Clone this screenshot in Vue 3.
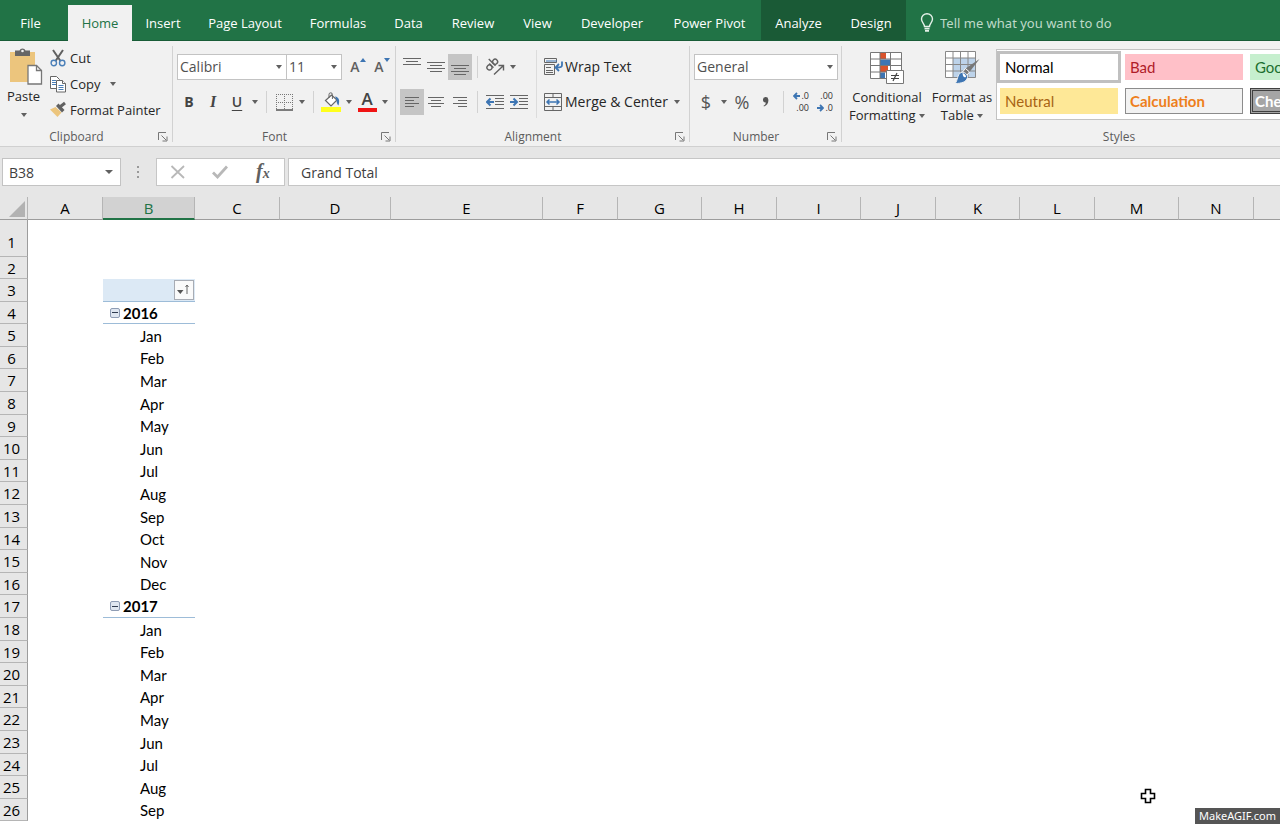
<script setup>
import { ref } from 'vue'

const tabs = [
  { name: 'File', width: 68 },
  { name: 'Home', width: 64, kind: 'active' },
  { name: 'Insert', width: 62 },
  { name: 'Page Layout', width: 102 },
  { name: 'Formulas', width: 84 },
  { name: 'Data', width: 57 },
  { name: 'Review', width: 72 },
  { name: 'View', width: 57 },
  { name: 'Developer', width: 92 },
  { name: 'Power Pivot', width: 103 },
  { name: 'Analyze', width: 75, kind: 'context' },
  { name: 'Design', width: 70, kind: 'context' },
]

const cellStyles = [
  { name: 'Normal', kind: 'normal' },
  { name: 'Bad', kind: 'bad' },
  { name: 'Good', kind: 'good' },
  { name: 'Neutral', kind: 'neutral' },
  { name: 'Calculation', kind: 'calculation' },
  { name: 'Check Cell', kind: 'check' },
]

const columns = [
  { name: 'A', width: 75 },
  { name: 'B', width: 92 },
  { name: 'C', width: 85 },
  { name: 'D', width: 111 },
  { name: 'E', width: 152 },
  { name: 'F', width: 75 },
  { name: 'G', width: 84 },
  { name: 'H', width: 75 },
  { name: 'I', width: 84 },
  { name: 'J', width: 75 },
  { name: 'K', width: 84 },
  { name: 'L', width: 75 },
  { name: 'M', width: 84 },
  { name: 'N', width: 75 },
]

const months = ['Jan', 'Feb', 'Mar', 'Apr', 'May', 'Jun', 'Jul', 'Aug', 'Sep', 'Oct', 'Nov', 'Dec']
const pivot = [
  { kind: 'blank' },
  { kind: 'blank' },
  { kind: 'filter' },
  { kind: 'year', text: '2016' },
  ...months.map((text) => ({ kind: 'month', text })),
  { kind: 'year', text: '2017' },
  ...months.slice(0, 9).map((text) => ({ kind: 'month', text })),
]
const rowHeights = [23, 22, 23, 22, 23]
const rows = pivot.map((row, i) => ({
  ...row,
  number: i + 1,
  height: i === 0 ? 37 : i === 1 ? 22 : rowHeights[(i - 2) % 5],
}))

const fontName = ref('Calibri')
const fontSize = ref('11')
const numberFormat = ref('General')
const cellName = ref('B38')
const formula = ref('Grand Total')
</script>

<template>
  <div class="app">
    <header class="tabs">
      <nav class="tab-list" aria-label="Ribbon tabs">
        <button
          v-for="tab in tabs"
          :key="tab.name"
          class="tab"
          :class="tab.kind"
          :style="{ width: tab.width + 'px' }"
        >{{ tab.name }}</button>
      </nav>
      <label class="tell">
        <svg width="14" height="20" viewBox="0 0 14 20" fill="none" stroke="#e4f0e8" stroke-width="1.4">
          <path d="M4.5 13.5C4.5 10.5 1.5 9.5 1.5 6a5.5 5.2 0 0 1 11 0c0 3.500-3 4.500-3 7.500z" />
          <path d="M4.500 15.700h5M5 17.800h4" stroke-width="1.800" />
        </svg>
        <input type="text" aria-label="Tell me" placeholder="Tell me what you want to do" />
      </label>
    </header>

    <div class="ribbon">
      <section class="group clipboard">
        <div class="body clip-body">
          <button class="paste">
            <svg width="34" height="37" viewBox="0 0 34 37">
              <rect x="1" y="4" width="25" height="30" fill="#ecc57d" />
              <path d="M6 2.500h4.500a3.200 3.200 0 0 1 6 0H21V8H6z" fill="#666" />
              <circle cx="13.500" cy="3" r="1.300" fill="#f1f1f1" />
              <path d="M19 17.500h8.500l5 5V36H19z" fill="#fff" stroke="#777" stroke-width="1.300" />
              <path d="M27.500 17.500v5h5" fill="none" stroke="#777" stroke-width="1.300" />
            </svg>
            <span>Paste</span>
            <i class="arrow"></i>
          </button>
          <div class="clip-list">
            <button class="small">
              <svg width="16" height="18" viewBox="0 0 16 18" fill="none">
                <path d="M3 1l7.500 11M13 1L5.500 12" stroke="#606060" stroke-width="2" />
                <circle cx="3.800" cy="14" r="2.700" stroke="#4a7fb8" stroke-width="1.400" />
                <circle cx="12.200" cy="14" r="2.700" stroke="#4a7fb8" stroke-width="1.400" />
              </svg>
              <span>Cut</span>
            </button>
            <button class="small">
              <svg width="16" height="18" viewBox="0 0 16 18" fill="#fff" stroke="#666">
                <path d="M.5 1.500h6l3 3v9h-9z" />
                <path d="M2 5.500h4M2 7.500h4M2 9.500h4" stroke="#4a7fb8" />
                <path d="M6.500 5.500h6l3 3v8.500h-9z" />
                <path d="M12.500 5.500v3h3" />
                <path d="M8.500 10.500h5M8.500 12.500h5M8.500 14.500h5" stroke="#4a7fb8" />
              </svg>
              <span>Copy</span>
              <i class="arrow spaced"></i>
            </button>
            <button class="small">
              <svg width="16" height="18" viewBox="0 0 16 18">
                <path d="M0 8.500l5.500-2.500 6 5.500-4 4.500z" fill="#ecc57d" />
                <path d="M6 5l2.500-2.500 6 6.500-2.500 2.500z" fill="#606060" />
                <path d="M10.500 5.500L15 2" stroke="#606060" stroke-width="3" />
              </svg>
              <span>Format Painter</span>
            </button>
          </div>
        </div>
        <footer class="foot"><span>Clipboard</span>
          <button class="launch" aria-label="Clipboard settings"><svg width="10" height="10" viewBox="0 0 10 10" fill="none" stroke="#777"><path d="M.5 8V.5H8M3.500 3.500L8 8M9 4.500V9H4.500" /></svg></button>
        </footer>
      </section>

      <section class="group font">
        <div class="body stack">
          <div class="line">
            <div class="combo name">
              <select v-model="fontName" aria-label="Font"><option>Calibri</option></select>
              <i class="arrow"></i>
            </div>
            <div class="combo size">
              <select v-model="fontSize" aria-label="Font size"><option>11</option></select>
              <i class="arrow"></i>
            </div>
            <button class="tool grow" aria-label="Increase font size"><span class="letter">A</span><svg width="6" height="4" viewBox="0 0 6 4"><path d="M0 4l3-4 3 4z" fill="#3d75b3" /></svg></button>
            <button class="tool grow" aria-label="Decrease font size"><span class="letter">A</span><svg width="6" height="4" viewBox="0 0 6 4"><path d="M0 0l3 4 3-4z" fill="#3d75b3" /></svg></button>
          </div>
          <div class="line">
            <button class="tool bold">B</button>
            <button class="tool italic">I</button>
            <button class="tool under">U</button>
            <button class="drop" aria-label="Underline options"><i class="arrow"></i></button>
            <span class="sep"></span>
            <button class="tool" aria-label="Borders">
              <svg width="17" height="17" viewBox="0 0 17 17" fill="none" stroke="#777">
                <path d="M.5 0v16M16.500 0v16M8.500 0v16M0 .5h17M0 8.500h17" stroke-dasharray="1 1" />
                <path d="M0 16h17" stroke="#555" stroke-width="1.500" />
              </svg>
            </button>
            <button class="drop" aria-label="Border options"><i class="arrow"></i></button>
            <span class="sep"></span>
            <button class="tool" aria-label="Fill color">
              <svg width="20" height="20" viewBox="0 0 20 20">
                <path d="M4.500 8.500l6-5.500 5.500 5-6 6z" fill="#fff" stroke="#666" stroke-width="1.200" />
                <path d="M8 6V2.500a1.700 1.700 0 0 1 3.400 0V7" fill="none" stroke="#666" />
                <path d="M14 4.500c4 .5 5 4 3.500 9-1.500-1-2-4-2-6z" fill="#3d75b3" />
                <path d="M0 15h20v5H0z" fill="#ffff1c" />
              </svg>
            </button>
            <button class="drop" aria-label="Fill color options"><i class="arrow"></i></button>
            <button class="tool fontcolor" aria-label="Font color"><span>A</span></button>
            <button class="drop" aria-label="Font color options"><i class="arrow"></i></button>
          </div>
        </div>
        <footer class="foot"><span>Font</span>
          <button class="launch" aria-label="Font settings"><svg width="10" height="10" viewBox="0 0 10 10" fill="none" stroke="#777"><path d="M.5 8V.5H8M3.500 3.500L8 8M9 4.500V9H4.500" /></svg></button>
        </footer>
      </section>

      <section class="group alignment">
        <div class="body align-body">
          <div class="stack align-left">
            <div class="line">
              <button class="tool" aria-label="Top align"><svg width="18" height="18" viewBox="0 0 18 18" stroke="#666"><path d="M0 .5h18M3 3.500h12M0 6.500h18" /></svg></button>
              <button class="tool" aria-label="Middle align"><svg width="18" height="18" viewBox="0 0 18 18" stroke="#666"><path d="M0 4.500h18M3 7.500h12M0 10.500h18M3 13.500h12" /></svg></button>
              <button class="tool on" aria-label="Bottom align"><svg width="18" height="18" viewBox="0 0 18 18" stroke="#666"><path d="M0 7.500h18M3 10.500h12M0 13.500h18M3 16.500h12" /></svg></button>
              <span class="sep"></span>
              <button class="tool" aria-label="Orientation">
                <svg width="20" height="20" viewBox="0 0 20 20" fill="none" stroke="#606060" stroke-width="1.400">
                  <g transform="rotate(-45 8 9)">
                    <circle cx="4.500" cy="7.500" r="2.500" /><path d="M7.200 4.500v6" />
                    <circle cx="12.500" cy="7.500" r="2.500" /><path d="M10 1v9.500" />
                  </g>
                  <path d="M9 17.500l9-8.500M13.500 8.500H18.500v5" />
                </svg>
              </button>
              <button class="drop" aria-label="Orientation options"><i class="arrow"></i></button>
            </div>
            <div class="line">
              <button class="tool on" aria-label="Align left"><svg width="14" height="14" viewBox="0 0 14 14" stroke="#666"><path d="M0 2.500h14M0 5.500h9M0 8.500h14M0 11.500h9" /></svg></button>
              <button class="tool" aria-label="Center"><svg width="16" height="14" viewBox="0 0 16 14" stroke="#666"><path d="M0 2.500h16M3 5.500h10M0 8.500h16M3 11.500h10" /></svg></button>
              <button class="tool" aria-label="Align right"><svg width="14" height="14" viewBox="0 0 14 14" stroke="#666"><path d="M0 2.500h14M5 5.500h9M0 8.500h14M5 11.500h9" /></svg></button>
              <span class="sep"></span>
              <button class="tool" aria-label="Decrease indent"><svg width="18" height="16" viewBox="0 0 18 16" stroke="#666" fill="none"><path d="M0 1.500h18M9 4.500h9M9 7.500h9M9 10.500h9M0 14.500h18" /><path d="M8 8H1.500M4.500 4.500L1 8l3.500 3.500" stroke="#3d75b3" stroke-width="2" /></svg></button>
              <button class="tool" aria-label="Increase indent"><svg width="18" height="16" viewBox="0 0 18 16" stroke="#666" fill="none"><path d="M0 1.500h18M9 4.500h9M9 7.500h9M9 10.500h9M0 14.500h18" /><path d="M0 8h6.500M3.500 4.500L7 8l-3.500 3.500" stroke="#3d75b3" stroke-width="2" /></svg></button>
            </div>
          </div>
          <div class="stack align-right">
            <div class="line">
              <button class="small">
                <svg width="19" height="18" viewBox="0 0 19 18" fill="none" stroke="#666">
                  <path d="M.5.5h12v4H.5zM.5 6.500h10v10H.5z" />
                  <path d="M2 9.500h5M2 12.500h7M2 14.500h7" stroke="#666" />
                  <path d="M2 3h11" stroke="#3d75b3" />
                  <path d="M18 3.500v3.500c0 2-1 2.500-5.500 2.500M15 6l-3.500 3.500L15 13" stroke="#3d75b3" stroke-width="1.800" />
                </svg>
                <span>Wrap Text</span>
              </button>
            </div>
            <div class="line">
              <button class="small">
                <svg width="19" height="18" viewBox="0 0 19 18" fill="none" stroke="#666">
                  <path d="M.5.5h17v17H.5zM.5 4.500h17M.5 13.500h17M9 .5v4M9 13.500v4" />
                  <path d="M3 9h12M5.500 6.500L3 9l2.500 2.500M12.500 6.500L15 9l-2.500 2.500" stroke="#3d75b3" stroke-width="1.500" />
                </svg>
                <span>Merge &amp; Center</span>
              </button>
              <button class="drop merge-drop" aria-label="Merge options"><i class="arrow"></i></button>
            </div>
          </div>
        </div>
        <footer class="foot"><span>Alignment</span>
          <button class="launch" aria-label="Alignment settings"><svg width="10" height="10" viewBox="0 0 10 10" fill="none" stroke="#777"><path d="M.5 8V.5H8M3.500 3.500L8 8M9 4.500V9H4.500" /></svg></button>
        </footer>
      </section>

      <section class="group number">
        <div class="body stack">
          <div class="line">
            <div class="combo format">
              <select v-model="numberFormat" aria-label="Number format"><option>General</option></select>
              <i class="arrow"></i>
            </div>
          </div>
          <div class="line">
            <button class="tool glyph">$</button>
            <button class="drop" aria-label="Currency options"><i class="arrow"></i></button>
            <button class="tool glyph">%</button>
            <button class="tool" aria-label="Comma style"><svg width="8" height="10" viewBox="0 0 8 10"><path d="M1 3a2.500 2.500 0 0 1 5.300-.5C6.800 5.500 5 8.500 2 9.500L1.500 8.700C3 8 3.800 6.800 3.800 5.400 2 5.600 1 4.500 1 3z" fill="#555" /></svg></button>
            <span class="sep"></span>
            <button class="tool decimals" aria-label="Increase decimal">
              <span><svg width="7" height="8" viewBox="0 0 7 8" fill="none" stroke="#3d75b3" stroke-width="1.800"><path d="M7 4H1.500M4 1L1 4l3 3" /></svg>.0</span>
              <span>.00</span>
            </button>
            <button class="tool decimals" aria-label="Decrease decimal">
              <span>.00</span>
              <span><svg width="7" height="8" viewBox="0 0 7 8" fill="none" stroke="#3d75b3" stroke-width="1.800"><path d="M0 4h5.500M3 1l3 3-3 3" /></svg>.0</span>
            </button>
          </div>
        </div>
        <footer class="foot"><span>Number</span>
          <button class="launch" aria-label="Number settings"><svg width="10" height="10" viewBox="0 0 10 10" fill="none" stroke="#777"><path d="M.5 8V.5H8M3.500 3.500L8 8M9 4.500V9H4.500" /></svg></button>
        </footer>
      </section>

      <section class="group styles">
        <div class="body styles-body">
          <button class="large conditional">
            <svg width="36" height="34" viewBox="0 0 36 34">
              <path d="M1.500 1.500h31v26h-31z" fill="#fff" />
              <path d="M11 2h6v6h-6zM11 15h8v6h-8z" fill="#d9532c" />
              <path d="M11 8.500h10v6H11zM11 21.500h5v5.500h-5z" fill="#3d75b3" />
              <path d="M1.500 1.500h31v26h-31zM1.500 8h31M1.500 14.500h31M1.500 21h31M11 1.500v26M21.500 1.500v26" fill="none" stroke="#777" />
              <path d="M17.500 19.500h17v13h-17z" fill="#fff" stroke="#777" />
              <path d="M22 24.500h8M22 27.500h8M28 22l-4 8" stroke="#444" stroke-width="1.200" />
            </svg>
            <span>Conditional</span>
            <span>Formatting <i class="arrow"></i></span>
          </button>
          <button class="large table-format">
            <svg width="36" height="34" viewBox="0 0 36 34">
              <path d="M1.500.5h30v26h-30z" fill="#fff" />
              <path d="M9 7h22.500v19.500H9z" fill="#bdd3ea" />
              <path d="M1.500.5h30v26h-30zM1.500 7h30M1.500 13.500h30M1.500 20h30M9 .5v26M16.500.5v26M24 .5v26" fill="none" stroke="#888" />
              <path d="M35.500 8l-10 13-4-3.500z" fill="#777" />
              <path d="M25.500 21l-2.500 3-4.500-3 3-3.500z" fill="#777" stroke="#fff" />
              <path d="M17 21.500c3-1 7 1.500 6.500 5-1 4.500-6 6-12.500 6 3-3 2-9 6-11z" fill="#3d75b3" stroke="#f1f1f1" />
              <path d="M18.500 22c2 .5 3.500 2 3.500 4-2 1-3 0-3.500-4z" fill="#fff" />
            </svg>
            <span>Format as</span>
            <span>Table <i class="arrow"></i></span>
          </button>
          <div class="gallery">
            <button v-for="s in cellStyles" :key="s.name" class="style" :class="s.kind">{{ s.name }}</button>
          </div>
        </div>
        <footer class="foot"><span>Styles</span></footer>
      </section>
    </div>

    <div class="formula-bar">
      <div class="name-box">
        <input v-model="cellName" type="text" aria-label="Name box" />
        <i class="arrow"></i>
      </div>
      <svg class="dots" width="4" height="14" viewBox="0 0 4 14" fill="#999"><path d="M1 1h2v2H1zM1 6h2v2H1zM1 11h2v2H1z" /></svg>
      <div class="entry">
        <button aria-label="Cancel"><svg width="16" height="14" viewBox="0 0 16 14" fill="none" stroke="#b8b8b8" stroke-width="1.800"><path d="M1.500 1l12.500 12M14 1L1.500 13" /></svg></button>
        <button aria-label="Enter"><svg width="16" height="14" viewBox="0 0 16 14" fill="none" stroke="#b8b8b8" stroke-width="2.800"><path d="M1 7.500l4.500 4.500L15 1.500" /></svg></button>
        <button class="fx" aria-label="Insert function"><span class="f">f</span><span class="x">x</span></button>
      </div>
      <input v-model="formula" class="formula" type="text" aria-label="Formula" />
    </div>

    <main class="sheet">
      <table>
        <colgroup>
          <col class="head-col" />
          <col v-for="c in columns" :key="c.name" :style="{ width: c.width + 'px' }" />
          <col />
        </colgroup>
        <thead>
          <tr>
            <th class="corner"><svg width="16" height="16" viewBox="0 0 16 16"><path d="M16 0v16H0z" fill="#b2b2b2" /></svg></th>
            <th v-for="c in columns" :key="c.name" scope="col" :class="{ selected: c.name === 'B' }">{{ c.name }}</th>
            <th class="last"></th>
          </tr>
        </thead>
        <tbody>
          <tr v-for="row in rows" :key="row.number" :style="{ height: row.height + 'px' }">
            <th scope="row">{{ row.number }}</th>
            <td></td>
            <td :class="row.kind">
              <button v-if="row.kind === 'filter'" class="filter-button" aria-label="Filter and sort">
                <svg width="14" height="12" viewBox="0 0 14 12"><path d="M0 6h6.500L3.300 10z" fill="#555" /><path d="M10 10V1M8.500 3L10 1l1.500 2" fill="none" stroke="#666" /></svg>
              </button>
              <div v-else-if="row.kind === 'year'" class="year-line">
                <button class="fold" aria-label="Collapse"></button>
                <span>{{ row.text }}</span>
              </div>
              <template v-else>{{ row.text }}</template>
            </td>
            <td v-for="n in columns.length - 1" :key="n"></td>
          </tr>
        </tbody>
      </table>
    </main>

    <svg class="cursor" width="16" height="16" viewBox="0 0 16 16"><path d="M5.500 1.500h5v4h4v5h-4v4h-5v-4h-4v-5h4z" fill="#fff" stroke="#000" stroke-width="1.600" /></svg>
    <div class="badge">MakeAGIF.com</div>
  </div>
</template>

<style>
html,
body {
  overflow: hidden;
  background: #fff;
}
</style>

<style scoped>
.app {
  position: relative;
  display: flex;
  flex-direction: column;
  height: 100vh;
  overflow: hidden;
  background: #fff;
  color: #262626;
  font: 14px/18px "Open Sans", "Noto Sans", sans-serif;
}
.app * {
  box-sizing: border-box;
}
button,
input,
select {
  margin: 0;
  padding: 0;
  border: 0;
  border-radius: 0;
  background: transparent;
  color: inherit;
  font: inherit;
}
svg {
  display: block;
  flex: none;
}
.arrow {
  display: inline-block;
  flex: none;
  border: 3px solid transparent;
  border-top: 4px solid #606060;
  border-bottom: 0;
}

/* Tabs */
.tabs {
  display: flex;
  flex: none;
  height: 41px;
  background: #217346;
  border-bottom: 1px solid #185c37;
  color: #fff;
}
.tab-list {
  display: flex;
  flex: none;
}
.tab {
  height: 40px;
  padding-top: 6px;
  white-space: nowrap;
  font-size: 13px;
}
.tab:first-child {
  padding-right: 7px;
}
.tab.active {
  height: 36px;
  margin-top: 5px;
  padding-top: 0;
  margin-bottom: -1px;
  background: #f1f1f1;
  color: #217346;
}
.tab.context {
  background: #1a5a36;
}
.tell {
  display: flex;
  flex: 1;
  align-items: center;
  gap: 6px;
  padding: 6px 0 0 14px;
}
.tell input {
  flex: 1;
  min-width: 0;
  font: 13px/18px "Noto Sans", sans-serif;
  outline: 0;
}
.tell input::placeholder {
  color: #bfdac9;
  opacity: 1;
}

/* Ribbon */
.ribbon {
  display: flex;
  flex: none;
  height: 106px;
  overflow: hidden;
  background: #f1f1f1;
  border-bottom: 1px solid #d0d0d0;
}
.group {
  display: flex;
  flex-direction: column;
  flex: none;
  position: relative;
}
.group::after {
  content: "";
  position: absolute;
  top: 5px;
  right: 0;
  bottom: 4px;
  width: 1px;
  background: #d2d2d2;
}
.clipboard { width: 173px; }
.font { width: 223px; }
.alignment { width: 294px; }
.number { width: 152px; }
.styles { width: 554px; }
.body {
  flex: 1;
  padding: 0 4px;
}
.foot {
  display: flex;
  align-items: center;
  height: 18px;
  color: #5c5c5c;
  font-size: 12px;
}
.foot span {
  flex: 1;
  text-align: center;
}
.launch {
  display: grid;
  place-items: center;
  width: 20px;
  height: 16px;
}
.stack {
  display: flex;
  flex-direction: column;
  gap: 9px;
  padding-top: 13px;
}
.line {
  display: flex;
  align-items: center;
  height: 26px;
}
.tool {
  display: grid;
  place-items: center;
  flex: none;
  width: 24px;
  height: 26px;
  color: #444;
}
.tool.on {
  background: #c5c5c5;
}
.drop {
  display: grid;
  place-items: center;
  flex: none;
  width: 12px;
  height: 26px;
}
.sep {
  flex: none;
  width: 1px;
  height: 22px;
  margin: 0 5px;
  background: #d2d2d2;
}
.small {
  display: flex;
  align-items: center;
  gap: 3px;
  height: 26px;
  white-space: nowrap;
}
.clip-body {
  display: flex;
  gap: 4px;
  font-size: 13px;
}
.paste {
  display: flex;
  flex-direction: column;
  align-items: center;
  width: 39px;
  padding-top: 7px;
}
.paste svg {
  margin-left: 5px;
}
.paste span {
  margin: 2px 0 8px;
}
.clip-list {
  display: flex;
  flex-direction: column;
  padding: 4px 0 0 3px;
}
.clip-list .small {
  gap: 4px;
}
.spaced {
  margin-left: 6px;
}
.combo,
.name-box {
  position: relative;
  flex: none;
  height: 26px;
  background: #fff;
  border: 1px solid #c3c3c3;
}
.combo select {
  width: 100%;
  height: 100%;
  padding: 0 2px;
  appearance: none;
  color: #505050;
  outline: 0;
}
.combo .arrow,
.name-box .arrow {
  position: absolute;
  top: 50%;
  right: 4px;
  margin-top: -2px;
  pointer-events: none;
}
.combo.name { width: 110px; }
.combo.size {
  width: 56px;
  margin: 0 4px 0 -1px;
}
.combo.format { width: 144px; }
.grow {
  grid-template-columns: auto auto;
  justify-content: center;
  color: #606060;
}
.grow svg {
  align-self: start;
  margin-top: 4px;
}
.letter {
  font-size: 14px;
  font-weight: 600;
}
.bold {
  font-weight: 700;
}
.italic {
  font: italic 700 16px "Liberation Serif", serif;
}
.under {
  font-weight: 600;
  text-decoration: underline;
  text-underline-offset: 3px;
}
.fontcolor span {
  width: 19px;
  height: 20px;
  border-bottom: 4px solid #f01414;
  font-size: 17px;
  font-weight: 600;
  line-height: 14px;
}
.align-body {
  display: flex;
}
.align-left {
  position: relative;
  width: 137px;
}
.align-left::after {
  content: "";
  position: absolute;
  top: 9px;
  right: 0;
  width: 1px;
  height: 68px;
  background: #dcdcdc;
}
.align-right {
  padding-left: 7px;
}
.align-right .small {
  gap: 2px;
}
.merge-drop {
  margin-left: 3px;
}
.glyph {
  font-size: 18px;
  color: #555;
}
.decimals {
  align-content: center;
  justify-items: end;
  padding-right: 4px;
  font-size: 9px;
  line-height: 12px;
  color: #333;
}
.decimals span {
  display: flex;
  align-items: center;
  gap: 1px;
}
.styles-body {
  display: flex;
  padding-right: 0;
  min-width: 0;
}
.large {
  display: flex;
  flex-direction: column;
  align-items: center;
  flex: none;
  padding-top: 10px;
  white-space: nowrap;
  font-size: 13px;
}
.large svg {
  margin-bottom: 3px;
}
.large .arrow {
  margin-bottom: 2px;
}
.conditional { width: 82px; }
.table-format { width: 68px; }
.gallery {
  display: grid;
  grid-template-columns: repeat(3, 118px);
  grid-auto-rows: 26px;
  gap: 8px 7px;
  flex: 1;
  height: 71px;
  margin-top: 8px;
  padding: 4px 3px;
  background: #fff;
  border: 1px solid #c3c3c3;
}
.style {
  padding-left: 5px;
  text-align: left;
  font: 15px/26px Lato, "Open Sans", sans-serif;
}
.normal {
  color: #000;
  outline: 3px solid #c0c0c0;
}
.bad { background: #ffc0c8; color: #b01c28; }
.good { background: #c6efce; color: #1c7030; }
.neutral { background: #fee897; color: #a86414; }
.calculation,
.check {
  padding-left: 4px;
  border: 1px solid #8c8c8c;
  background: #f2f2f2;
  color: #ee7f1c;
  font-weight: 700;
  line-height: 24px;
}
.check {
  border: 3px double #404040;
  padding-left: 2px;
  background: #a5a5a5;
  color: #fff;
  line-height: 20px;
}

/* Formula bar */
.formula-bar {
  display: flex;
  align-items: center;
  flex: none;
  height: 50px;
  padding-left: 2px;
  background: #e6e6e6;
  color: #404040;
}
.name-box {
  width: 119px;
  height: 28px;
}
.name-box input {
  width: 90px;
  height: 100%;
  padding-left: 6px;
  outline: 0;
}
.name-box .arrow {
  right: 7px;
  border-width: 4px;
  border-bottom: 0;
}
.dots {
  margin: 0 16px 0 15px;
}
.entry {
  display: flex;
  align-items: center;
  width: 129px;
  height: 28px;
  margin-right: 3px;
  background: #fff;
  border: 1px solid #c6c6c6;
}
.entry button {
  display: flex;
  flex: 1;
  justify-content: center;
  color: #606060;
}
.fx {
  align-items: baseline;
  font-family: "Liberation Serif", serif;
  font-style: italic;
  font-weight: 700;
}
.f {
  font-size: 20px;
}
.x {
  font-size: 14px;
}
.formula {
  flex: 1;
  min-width: 0;
  height: 28px;
  padding-left: 12px;
  background: #fff;
  border: 1px solid #c6c6c6;
  border-right: 0;
  outline: 0;
}

/* Sheet */
.sheet {
  flex: 1;
  min-height: 0;
  overflow: hidden;
  color: #000;
  font: 15px/20px Lato, "Open Sans", sans-serif;
}
table {
  width: 100%;
  table-layout: fixed;
  border-collapse: separate;
  border-spacing: 0;
}
.head-col {
  width: 28px;
}
th,
td {
  padding: 0;
  font-weight: 400;
}
thead th {
  height: 23px;
  background: #e6e6e6;
  border-right: 1px solid #b5b5b5;
  border-bottom: 1px solid #9c9c9c;
  font: 15px/20px "Open Sans", "Noto Sans", sans-serif;
}
thead th.last {
  border-right: 0;
}
thead th.selected {
  padding-top: 1px;
  background: #d2d2d2;
  border-bottom: 2px solid #217346;
  color: #217346;
}
.corner svg {
  margin: 2px 2px 0 auto;
}
tbody th {
  padding-right: 4px;
  background: #e6e6e6;
  border-right: 1px solid #9c9c9c;
  border-bottom: 1px solid #b5b5b5;
  font: 15px/18px "Open Sans", "Noto Sans", sans-serif;
}
tbody tr:first-child th {
  padding-top: 8px;
}
.month {
  padding-left: 37px;
}
.year {
  border-bottom: 1px solid #9dbcd8;
  font-weight: 700;
}
.year-line {
  display: flex;
  align-items: center;
  gap: 3px;
  padding-left: 7px;
}
.fold {
  display: grid;
  place-items: center;
  width: 10px;
  height: 10px;
  background: #dfe6f0;
  border: 1px solid #8e9cb4;
  border-radius: 2px;
}
.fold::after {
  content: "";
  width: 6px;
  height: 1px;
  background: #303c50;
}
.filter {
  background: #dce9f5;
  border-bottom: 1px solid #9dbcd8;
}
.filter-button {
  display: grid;
  place-items: center;
  width: 20px;
  height: 20px;
  margin: 0 1px 0 auto;
  background: #fafafa;
  border: 1px solid #a8acb4;
}

/* Overlays */
.cursor {
  position: absolute;
  right: 124px;
  bottom: 20px;
}
.badge {
  position: absolute;
  right: 0;
  bottom: 0;
  padding: 0 4px;
  background: #555;
  color: #fff;
  font: 11px/16px "Noto Sans", sans-serif;
  white-space: nowrap;
}
</style>
